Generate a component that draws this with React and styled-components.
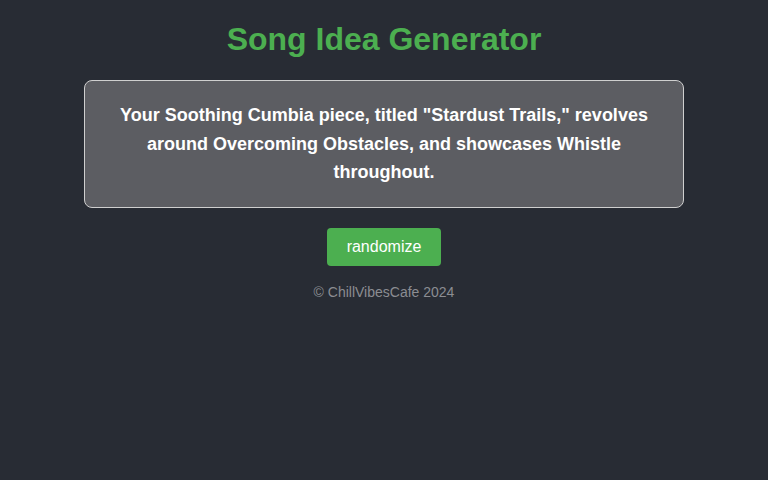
import React from "react";
import styled, { createGlobalStyle } from "styled-components";

const GlobalStyle = createGlobalStyle`
  html, body {
    margin: 0;
    background-color: #282c34;
  }
  body {
    font-family: "Liberation Sans", Arial, sans-serif;
    min-height: 100vh;
  }
`;

const App = () => {
  return (
    <>
      <GlobalStyle />
      <Page>
        <Title>Song Idea Generator</Title>
        <IdeaCard>
          Your Soothing Cumbia piece, titled "Stardust Trails," revolves
          around Overcoming Obstacles, and showcases Whistle throughout.
        </IdeaCard>
        <RandomButton>randomize</RandomButton>
        <Footer>© ChillVibesCafe 2024</Footer>
      </Page>
    </>
  );
};

export default App;

const Page = styled.div`
  display: flex;
  flex-direction: column;
  align-items: center;
  text-align: center;
`;

const Title = styled.h1`
  color: #4caf50;
  font-size: 32px;
  font-weight: bold;
  margin: 21.44px 0;
  line-height: normal;
`;

const IdeaCard = styled.div`
  box-sizing: border-box;
  width: 600px;
  padding: 20px;
  background-color: #5c5d62;
  border: 1px solid #cfcfcf;
  border-radius: 8px;
  color: #fff;
  font-size: 18px;
  font-weight: bold;
  line-height: 1.6;
  margin-bottom: 20px;
`;

const RandomButton = styled.button`
  font-family: "Liberation Sans", Arial, sans-serif;
  font-size: 16px;
  line-height: 18px;
  padding: 10px 20px;
  color: #fff;
  background-color: #4caf50;
  border: none;
  border-radius: 4px;
  cursor: pointer;

  &:hover {
    background-color: #45a049;
  }
`;

const Footer = styled.footer`
  margin-top: 18px;
  font-size: 14px;
  color: #8b8d92;
`;
